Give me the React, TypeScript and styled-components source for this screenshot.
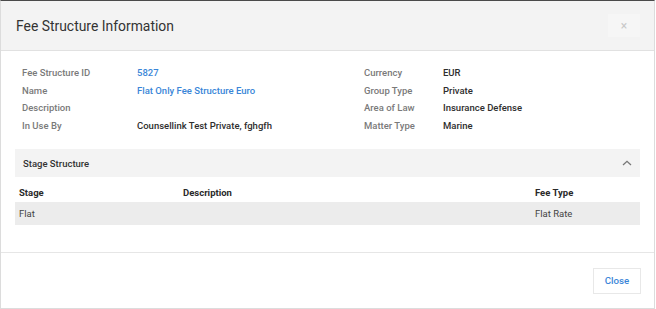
import React from "react";
import styled, { createGlobalStyle } from "styled-components";

const Global = createGlobalStyle`
  html, body { margin: 0; padding: 0; background: #ffffff; }
  body { font-family: Roboto, "Liberation Sans", Arial, sans-serif; }
  * { box-sizing: border-box; }
`;

const Modal = styled.div`
  width: 655px;
  height: 309px;
  background: #ffffff;
  border-top: 1px solid #4a4a4a;
  border-left: 1px solid #dcdcdc;
  border-right: 1px solid #dcdcdc;
  border-bottom: 1px solid #dcdcdc;
  display: flex;
  flex-direction: column;
`;

const Header = styled.div`
  height: 50px;
  flex: none;
  background: #f3f3f3;
  border-bottom: 1px solid #e1e1e1;
  display: flex;
  align-items: center;
  justify-content: space-between;
  padding: 0 14px 0 15px;
`;

const Title = styled.h1`
  margin: 0;
  font-size: 13.9px;
  font-weight: 400;
  color: #333333;
  letter-spacing: 0;
`;

const CloseX = styled.button`
  width: 32px;
  height: 23px;
  border: none;
  background: #f6f6f6;
  color: #c8c8c8;
  font-family: inherit;
  font-size: 12px;
  line-height: 1;
  padding: 0;
  cursor: pointer;
`;

const Body = styled.div`
  flex: 1;
  padding: 13px 14px 0 14px;
`;

const Details = styled.div`
  display: grid;
  grid-template-columns: 342px 1fr;
  padding-left: 7px;
`;

const Column = styled.div<{ $labelWidth: number }>`
  display: grid;
  grid-template-columns: ${(p) => p.$labelWidth}px 1fr;
  grid-auto-rows: 17.6px;
  align-items: center;
  font-size: 9.5px;
`;

const Label = styled.div`
  color: #7a7a7a;
  font-weight: 500;
`;

const Value = styled.div<{ $link?: boolean }>`
  color: ${(p) => (p.$link ? "#3a86d8" : "#2e2e2e")};
  font-weight: 500;
`;

const Panel = styled.div`
  margin-top: 15px;
  height: 28px;
  background: #f3f3f3;
  display: flex;
  align-items: center;
  justify-content: space-between;
  padding: 0 8px 0 8px;
  font-size: 9.5px;
  color: #333333;
  font-weight: 500;
`;

const Table = styled.div`
  font-size: 9.5px;
`;

const TableRow = styled.div<{ $head?: boolean }>`
  display: grid;
  grid-template-columns: 164px 352px 1fr;
  align-items: center;
  height: ${(p) => (p.$head ? "25px" : "22.5px")};
  background: ${(p) => (p.$head ? "transparent" : "#ececec")};
  padding-left: 4px;
  padding-top: ${(p) => (p.$head ? "5px" : "0")};
  color: ${(p) => (p.$head ? "#2a2a2a" : "#444444")};
  font-weight: ${(p) => (p.$head ? 700 : 400)};
`;

const Footer = styled.div`
  height: 56px;
  flex: none;
  border-top: 1px solid #e6e6e6;
  display: flex;
  align-items: center;
  justify-content: flex-end;
  padding-right: 13px;
`;

const CloseButton = styled.button`
  width: 48px;
  height: 26px;
  background: #ffffff;
  border: 1px solid #e8e8e8;
  color: #3a86d8;
  font-family: inherit;
  font-size: 9.7px;
  font-weight: 500;
  padding: 0;
  cursor: pointer;
`;

const Chevron = () => (
  <svg width="10" height="6" viewBox="0 0 10 6" fill="none">
    <path d="M1 5 L5 1.3 L9 5" stroke="#777" strokeWidth="1.3" />
  </svg>
);

const left = [
  ["Fee Structure ID", "5827", true],
  ["Name", "Flat Only Fee Structure Euro", true],
  ["Description", "", false],
  ["In Use By", "Counsellink Test Private, fghgfh", false],
] as const;

const right = [
  ["Currency", "EUR"],
  ["Group Type", "Private"],
  ["Area of Law", "Insurance Defense"],
  ["Matter Type", "Marine"],
] as const;

export default function App() {
  return (
    <>
      <Global />
      <Modal>
        <Header>
          <Title>Fee Structure Information</Title>
          <CloseX aria-label="close">×</CloseX>
        </Header>
        <Body>
          <Details>
            <Column $labelWidth={115}>
              {left.map(([l, v, link]) => (
                <React.Fragment key={l}>
                  <Label>{l}</Label>
                  <Value $link={link}>{v}</Value>
                </React.Fragment>
              ))}
            </Column>
            <Column $labelWidth={79}>
              {right.map(([l, v]) => (
                <React.Fragment key={l}>
                  <Label>{l}</Label>
                  <Value>{v}</Value>
                </React.Fragment>
              ))}
            </Column>
          </Details>
          <Panel>
            <span>Stage Structure</span>
            <Chevron />
          </Panel>
          <Table>
            <TableRow $head>
              <div>Stage</div>
              <div>Description</div>
              <div>Fee Type</div>
            </TableRow>
            <TableRow>
              <div>Flat</div>
              <div></div>
              <div>Flat Rate</div>
            </TableRow>
          </Table>
        </Body>
        <Footer>
          <CloseButton>Close</CloseButton>
        </Footer>
      </Modal>
    </>
  );
}
